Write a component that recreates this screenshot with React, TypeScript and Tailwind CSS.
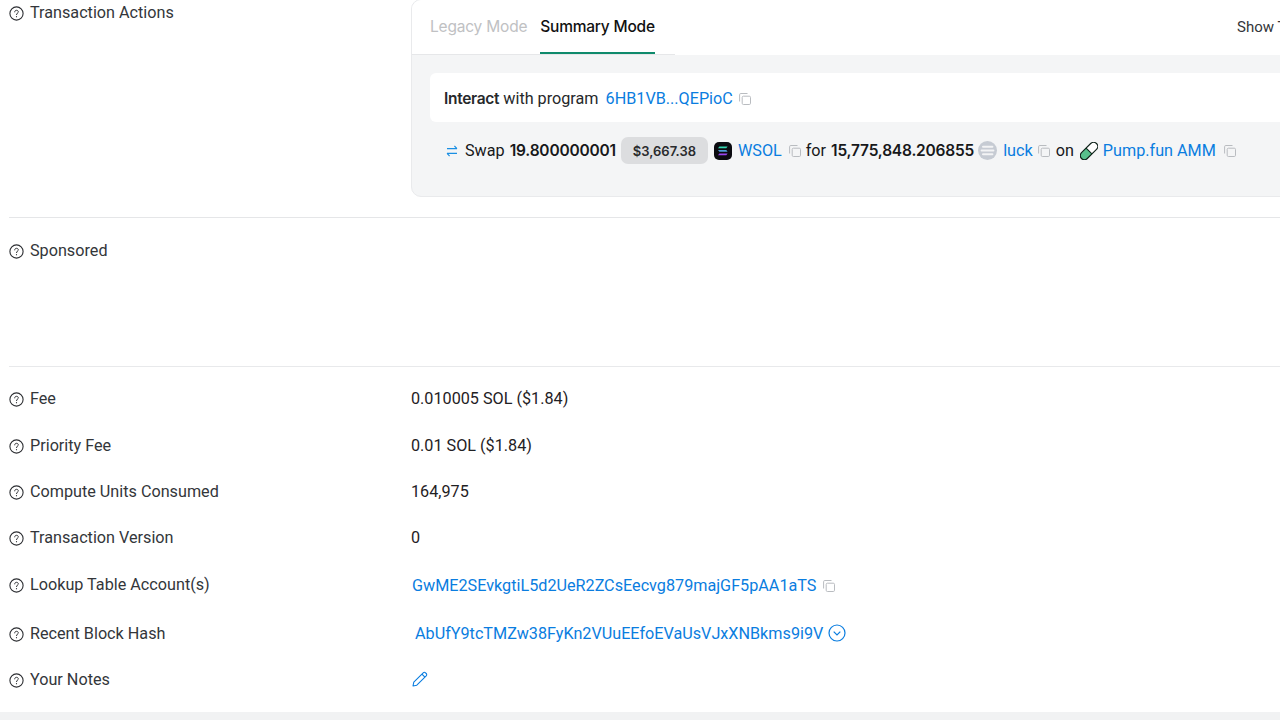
import type { ReactNode } from "react";

const LINK = "text-[#0a7de0]";

function HelpIcon() {
  return (
    <svg width="15" height="15" viewBox="0 0 15 15" fill="none" className="shrink-0 text-[#2d2f33]">
      <circle cx="7.5" cy="7.5" r="6.6" stroke="currentColor" strokeWidth="1.1" />
      <path d="M5.7 5.9c0-1 .8-1.6 1.8-1.6s1.8.6 1.8 1.5c0 1.4-1.8 1.4-1.8 2.8" stroke="currentColor" strokeWidth="1" strokeLinecap="round" />
      <circle cx="7.5" cy="10.7" r=".6" fill="currentColor" />
    </svg>
  );
}

function CopyIcon() {
  return (
    <svg width="14" height="14" viewBox="0 0 14 14" fill="none" className="shrink-0 text-[#b9bcc0]">
      <path d="M9.5 1.5H2.8a1.2 1.2 0 0 0-1.2 1.2v6.8" stroke="currentColor" strokeWidth="1" />
      <rect x="4.2" y="4.2" width="8.3" height="8.3" rx="1.2" stroke="currentColor" strokeWidth="1" />
    </svg>
  );
}

function SwapIcon() {
  return (
    <svg width="12" height="12" viewBox="0 0 12 12" fill="none" className="shrink-0 text-[#1a8fe3]">
      <path d="M1 3.6h10M8.4 1 11 3.6M11 8.4H1M3.6 11 1 8.4" stroke="currentColor" strokeWidth="1.1" />
    </svg>
  );
}

function SolanaIcon() {
  return (
    <svg width="18" height="18" viewBox="0 0 18 18" className="shrink-0">
      <rect width="18" height="18" rx="5" fill="#0b0b10" />
      <path d="M5.4 4.6h8.2l-1.3 1.7H4z" fill="#35d6b0" />
      <path d="M4 8.1h8.3l1.3 1.7H5.4z" fill="#4f9bd8" />
      <path d="M5.4 11.6h8.2l-1.3 1.7H4z" fill="#9a45ee" />
    </svg>
  );
}

function LuckIcon() {
  return (
    <svg width="19" height="19" viewBox="0 0 19 19" className="shrink-0">
      <circle cx="9.5" cy="9.5" r="9.5" fill="#c6cbd3" />
      <path d="M5 5.8h9.4M3.6 9.5h11.8M5 13.2h9.4" stroke="#f3f4f5" strokeWidth="2" strokeLinecap="round" />
    </svg>
  );
}

function PillIcon() {
  return (
    <svg width="18" height="18" viewBox="0 0 18 18" fill="none" className="shrink-0">
      <g transform="rotate(-45 9 9)">
        <path d="M2.5 4.9H9v8.2H2.5a4.1 4.1 0 0 1 0-8.2z" fill="#58c08c" />
        <path d="M9 4.9h6.5a4.1 4.1 0 0 1 0 8.2H9z" fill="#fff" />
        <rect x="-1.6" y="4.9" width="21.2" height="8.2" rx="4.1" stroke="#0d2018" strokeWidth="1.1" />
        <path d="M9 4.9v8.2" stroke="#0d2018" strokeWidth="1" />
      </g>
    </svg>
  );
}

function ChevronCircle() {
  return (
    <svg width="18" height="18" viewBox="0 0 18 18" fill="none" className="shrink-0 text-[#0a7de0]">
      <circle cx="9" cy="9" r="8" stroke="currentColor" strokeWidth="1.2" />
      <path d="m5.7 7.6 3.3 3.3 3.3-3.3" stroke="currentColor" strokeWidth="1.2" />
    </svg>
  );
}

function PencilIcon() {
  return (
    <svg width="16" height="16" viewBox="0 0 16 16" fill="none" className="shrink-0 text-[#0a7de0]">
      <path d="M1 15l.8-3.8L11.2 1.8a1.6 1.6 0 0 1 2.3 0l.7.7a1.6 1.6 0 0 1 0 2.3L4.8 14.2z" stroke="currentColor" strokeWidth="1.1" strokeLinejoin="round" />
      <path d="m9.9 3.1 3 3" stroke="currentColor" strokeWidth="1.1" />
    </svg>
  );
}

function Label({ text }: { text: string }) {
  return (
    <div className="flex w-[402px] shrink-0 items-center gap-[6px] text-[#33363a]">
      <HelpIcon />
      <span>{text}</span>
    </div>
  );
}

function Row({ label, className, children }: { label: string; className: string; children: ReactNode }) {
  return (
    <div className={`flex items-center ${className}`}>
      <Label text={label} />
      <div className="flex items-center gap-[5px] text-[#1f2124]">{children}</div>
    </div>
  );
}

export default function App() {
  return (
    <div className="h-[720px] w-[1280px] overflow-hidden bg-white font-['Roboto',sans-serif] text-[16.2px] leading-[24px]">
      <div className="w-[1500px] pl-[9px]">
        {/* Transaction Actions */}
        <div className="flex items-start border-b border-[#e5e6e8] pb-5">
          <div className="mt-px w-[402px] shrink-0">
            <Label text="Transaction Actions" />
          </div>
          <div className="-mt-px h-[198px] w-[1000px] overflow-hidden rounded-[10px] border border-[#e9eaec] bg-[#f4f5f6]">
            <div className="flex h-[55px] items-center bg-white">
              <div className="flex h-full w-[263px] gap-[13px] border-b border-[#e6e7e9] pl-[18px] font-['Inter',sans-serif] text-[15.5px]">
                <span className="flex h-full items-center tracking-[-0.2px] text-[#c0c1c3]">Legacy Mode</span>
                <span className="flex h-full items-center border-b-2 border-[#0f8a6c] pt-[2px] font-medium tracking-[-0.22px] text-[#111]">Summary Mode</span>
              </div>
              <div className="h-full flex-1 pl-[562px] pt-[15px] text-[15px] text-[#33363a]">Show Transaction Details</div>
            </div>
            <div className="mt-[18px] ml-[18px] flex h-[49px] items-center gap-[5px] rounded-l-[6px] bg-white pt-[2px] pl-[14px]">
              <span className="text-[#26282b]">
                <b className="font-['Inter',sans-serif] text-[15.5px] font-semibold tracking-[-0.3px]">Interact</b> with program
              </span>
              <span className={`${LINK} ml-[2px]`}>6HB1VB...QEPioC</span>
              <CopyIcon />
            </div>
            <div className="mt-[15px] ml-[34px] flex items-center whitespace-nowrap text-[#17181a]">
              <SwapIcon />
              <span className="ml-[7px]">Swap</span>
              <b className="ml-[5px] font-['Inter',sans-serif] text-[15.5px] font-semibold tracking-[-0.2px]">19.800000001</b>
              <span className="ml-[5px] flex h-[27px] w-[87px] items-center justify-center rounded-[7px] bg-[#dcdddf] font-['Inter',sans-serif] text-[13px] font-semibold text-[#2a2b2d]">$3,667.38</span>
              <span className="ml-[6px]"><SolanaIcon /></span>
              <span className={`${LINK} ml-[6px]`}>WSOL</span>
              <span className="ml-[6px]"><CopyIcon /></span>
              <span className="ml-[4px]">for</span>
              <b className="ml-[5px] font-['Inter',sans-serif] text-[15.5px] font-semibold tracking-[-0.2px]">15,775,848.206855</b>
              <span className="ml-[4px]"><LuckIcon /></span>
              <span className={`${LINK} ml-[6px]`}>luck</span>
              <span className="ml-[4px]"><CopyIcon /></span>
              <span className="ml-[5px]">on</span>
              <span className="ml-[6px]"><PillIcon /></span>
              <span className={`${LINK} ml-[5px]`}>Pump.fun AMM</span>
              <span className="ml-[7px]"><CopyIcon /></span>
            </div>
          </div>
        </div>

        {/* Sponsored */}
        <div className="h-[149px] border-b border-[#e8e9eb] pt-[21px]">
          <Label text="Sponsored" />
        </div>

        {/* Details */}
        <div className="pt-[20px]">
          <Row label="Fee" className="h-[24px]">0.010005 SOL ($1.84)</Row>
          <Row label="Priority Fee" className="mt-[23px] h-[24px]">0.01 SOL ($1.84)</Row>
          <Row label="Compute Units Consumed" className="mt-[22px] h-[24px]">164,975</Row>
          <Row label="Transaction Version" className="mt-[22px] h-[24px]">0</Row>
          <Row label="Lookup Table Account(s)" className="mt-[23px] h-[24px]">
            <span className={`${LINK} ml-[1px] mt-[2px]`}>GwME2SEvkgtiL5d2UeR2ZCsEecvg879majGF5pAA1aTS</span>
            <span className="ml-px mt-[2px]"><CopyIcon /></span>
          </Row>
          <Row label="Recent Block Hash" className="mt-[25px] h-[24px]">
            <span className={`${LINK} ml-[4px]`}>AbUfY9tcTMZw38FyKn2VUuEEfoEVaUsVJxXNBkms9i9V</span>
            <span className="mb-[2px]"><ChevronCircle /></span>
          </Row>
          <Row label="Your Notes" className="mt-[22px] h-[24px]">
            <span className="mb-[2px] ml-px"><PencilIcon /></span>
          </Row>
        </div>
      </div>
      <div className="mt-[20px] h-[20px] bg-[#f1f2f3]" />
    </div>
  );
}
